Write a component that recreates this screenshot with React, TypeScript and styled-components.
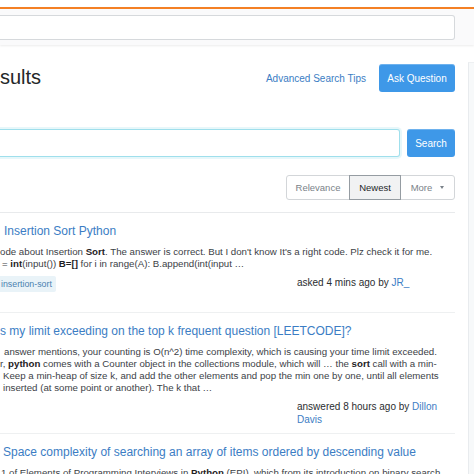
import React from 'react';
import styled, { createGlobalStyle } from 'styled-components';

const GlobalStyle = createGlobalStyle`
  html, body {
    margin: 0;
    padding: 0;
    background: #ffffff;
    overflow: hidden;
  }
  body {
    font-family: "Liberation Sans", Arial, sans-serif;
    color: #242729;
  }
`;

const Page = styled.div`
  width: 474px;
  height: 474px;
  overflow: hidden;
  display: flex;
  flex-direction: column;
`;

const TopBar = styled.div`
  margin-top: 7px;
  border-top: 2px solid #f48024;
  background: #fafafb;
  padding: 6px 19px 5px 0;
  box-shadow: 0 1px 2px rgba(12, 13, 14, 0.08);
`;

const TopSearch = styled.div`
  height: 23px;
  background: #ffffff;
  border: 1px solid #d6d9dc;
  border-left: none;
  border-radius: 0 3px 3px 0;
`;

const Body = styled.div`
  display: flex;
  flex: 1;
`;

const Main = styled.div`
  width: 455px;
  flex-shrink: 0;
  display: flex;
  flex-direction: column;
`;

const Sidebar = styled.div`
  margin: 17px 0 0 13px;
  flex: 1;
  background: #f7f9fa;
  border-left: 1px solid #e8ebee;
  border-top: 1px solid #eef0f2;
`;

const Header = styled.div`
  display: flex;
  align-items: center;
  padding-top: 19px;
  height: 28px;
`;

const Title = styled.h1`
  margin: 0;
  flex: 1;
  font-size: 20px;
  font-weight: 400;
  color: #242729;
  line-height: 28px;
  padding-bottom: 2px;
`;

const Link = styled.a`
  color: #3b7dc4;
  text-decoration: none;
  font-size: 10px;
  margin-right: 13px;
`;

const BlueButton = styled.button<{ w: number }>`
  width: ${p => p.w}px;
  height: 28px;
  border: none;
  border-radius: 3px;
  background: #3e98e8;
  color: #ffffff;
  font-family: inherit;
  font-size: 10px;
  padding: 0;
  box-shadow: inset 0 1px 0 rgba(255, 255, 255, 0.25);
`;

const SearchRow = styled.div`
  display: flex;
  gap: 7px;
  margin-top: 37px;
`;

const SearchInput = styled.div`
  flex: 1;
  height: 26px;
  background: #ffffff;
  border: 1px solid #9fdfec;
  border-left: none;
  border-radius: 0 3px 3px 0;
  box-shadow: 0 0 0 2px rgba(158, 222, 236, 0.25);
`;

const TabsRow = styled.div`
  display: flex;
  justify-content: flex-end;
  margin-top: 18px;
  padding-bottom: 12px;
  border-bottom: 1px solid #e8eaec;
`;

const Tab = styled.div<{ w: number; selected?: boolean }>`
  width: ${p => p.w}px;
  height: 25px;
  box-sizing: border-box;
  display: flex;
  align-items: center;
  justify-content: center;
  gap: 8px;
  font-size: 9.5px;
  color: ${p => (p.selected ? '#242729' : '#7a8289')};
  background: ${p => (p.selected ? '#f1f2f3' : '#ffffff')};
  border: 1px solid ${p => (p.selected ? '#959ca2' : '#d3d6d9')};
  margin-left: -1px;
  position: relative;
  z-index: ${p => (p.selected ? 1 : 0)};
  &:first-child {
    border-radius: 3px 0 0 3px;
  }
  &:last-child {
    border-radius: 0 3px 3px 0;
  }
`;

const Caret = styled.span`
  width: 0;
  height: 0;
  border-left: 2.5px solid transparent;
  border-right: 2.5px solid transparent;
  border-top: 3px solid #7a8289;
`;

const Result = styled.div<{ pb: number }>`
  padding: 10px 0 ${p => p.pb}px;
  border-bottom: 1px solid #eef0f1;
`;

const ResultTitle = styled.a<{ indent: number }>`
  display: block;
  padding-left: ${p => p.indent}px;
  font-size: 12px;
  line-height: 16px;
  color: #3b7dc4;
  text-decoration: none;
  white-space: nowrap;
`;

const Excerpt = styled.div`
  margin-top: 7px;
  font-size: 9.7px;
  line-height: 12.3px;
  color: #3c4146;
  white-space: nowrap;
  b {
    color: #1f2224;
  }
`;

const Line = styled.div<{ indent?: number }>`
  padding-left: ${p => p.indent ?? 0}px;
`;

const Meta = styled.div`
  display: flex;
  justify-content: space-between;
  align-items: flex-start;
  margin-top: 5px;
`;

const Tags = styled.div`
  display: flex;
  gap: 4px;
`;

const Tag = styled.span`
  height: 16px;
  line-height: 16px;
  padding: 0 4px 0 1px;
  font-size: 8.8px;
  color: #4a82b0;
  background: #e9f3f8;
  border-radius: 0 2px 2px 0;
`;

const Signature = styled.div`
  width: 144px;
  margin: 0 14px 0 auto;
  font-size: 10px;
  line-height: 13px;
  color: #2a2d30;
  a {
    color: #3b7dc4;
    text-decoration: none;
  }
`;

export default function App() {
  return (
    <Page>
      <GlobalStyle />
      <TopBar>
        <TopSearch />
      </TopBar>
      <Body>
        <Main>
          <Header>
            <Title>sults</Title>
            <Link>Advanced Search Tips</Link>
            <BlueButton w={76}>Ask Question</BlueButton>
          </Header>

          <SearchRow>
            <SearchInput />
            <BlueButton w={48}>Search</BlueButton>
          </SearchRow>

          <TabsRow>
            <Tab w={64}>Relevance</Tab>
            <Tab w={52} selected>Newest</Tab>
            <Tab w={55}>
              More <Caret />
            </Tab>
          </TabsRow>

          <Result pb={20}>
            <ResultTitle indent={4}>Insertion Sort Python</ResultTitle>
            <Excerpt>
              <Line>
                ode about Insertion <b>Sort</b>. The answer is correct. But I don&apos;t know It&apos;s a right code. Plz check it for me.
              </Line>
              <Line indent={2}>
                = <b>int</b>(input()) <b>B=[]</b> for i in range(A): B.append(int(input …
              </Line>
            </Excerpt>
            <Meta>
              <Tags>
                <Tag>insertion-sort</Tag>
              </Tags>
              <Signature>
                asked 4 mins ago by <a>JR_</a>
              </Signature>
            </Meta>
          </Result>

          <Result pb={7}>
            <ResultTitle indent={0}>s my limit exceeding on the top k frequent question [LEETCODE]?</ResultTitle>
            <Excerpt>
              <Line indent={4}>
                answer mentions, your counting is O(n^2) time complexity, which is causing your time limit exceeded.
              </Line>
              <Line>
                r, <b>python</b> comes with a Counter object in the collections module, which will … the <b>sort</b> call with a min-
              </Line>
              <Line indent={3}>
                Keep a min-heap of size k, and add the other elements and pop the min one by one, until all elements
              </Line>
              <Line indent={3}>inserted (at some point or another). The k that …</Line>
            </Excerpt>
            <Meta>
              <Signature>
                answered 8 hours ago by <a>Dillon</a> <a>Davis</a>
              </Signature>
            </Meta>
          </Result>

          <Result pb={8}>
            <ResultTitle indent={3}>
              Space complexity of searching an array of items ordered by descending value
            </ResultTitle>
            <Excerpt>
              <Line indent={1}>
                1 of Elements of Programming Interviews in <b>Python</b> (EPI), which from its introduction on binary search …
              </Line>
            </Excerpt>
          </Result>
        </Main>
        <Sidebar />
      </Body>
    </Page>
  );
}
